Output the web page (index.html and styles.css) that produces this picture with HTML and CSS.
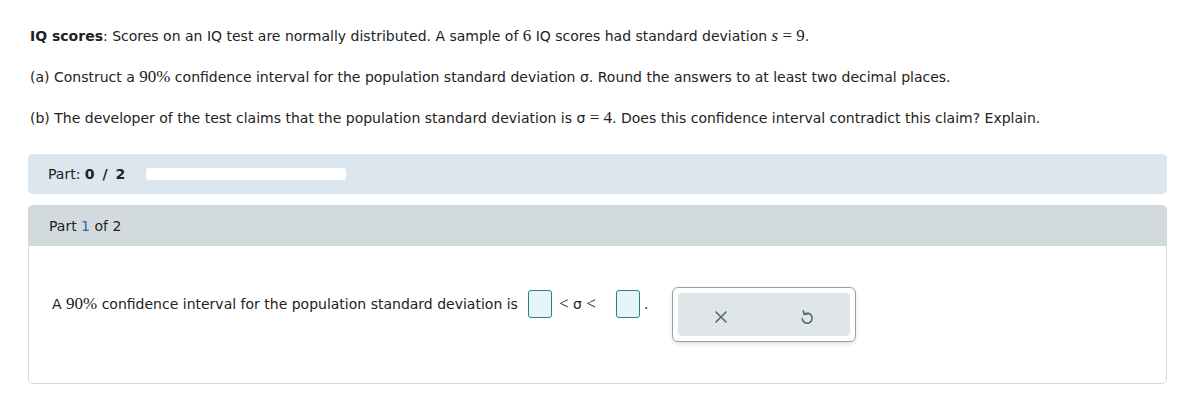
FILE: index.html
```html
<!DOCTYPE html>
<html>
<head>
<meta charset="utf-8">
<link rel="stylesheet" href="styles.css">
</head>
<body>
<div class="page">
  <div class="question">
    <p class="line"><b>IQ scores</b>: Scores on an IQ test are normally distributed. A sample of <span class="m">6</span> IQ scores had standard deviation <span class="m"><i>s</i> = 9</span>.</p>
    <p class="line">(a) Construct a <span class="m">90%</span> confidence interval for the population standard deviation <span class="sig">σ</span>. Round the answers to at least two decimal places.</p>
    <p class="line">(b) The developer of the test claims that the population standard deviation is <span class="sig">σ</span> <span class="m">= 4</span>. Does this confidence interval contradict this claim? Explain.</p>
  </div>

  <div class="progress">
    <span class="plabel">Part: <b class="pval">0 / 2</b></span>
    <span class="pbar"></span>
  </div>

  <div class="panel">
    <div class="panel-head"><span>Part <span class="num">1</span> of 2</span></div>
    <div class="panel-body">
      <div class="answer">
        <span>A <span class="m">90%</span> confidence interval for the population standard deviation is</span>
        <span class="box"></span>
        <span class="rel"><span class="m">&lt;</span> σ <span class="m">&lt;</span></span>
        <span class="box"></span>
        <span class="dot">.</span>
      </div>
      <div class="tools">
        <div class="tools-inner">
          <svg class="ico" width="14" height="14" viewBox="0 0 14 14"><path d="M2 2 L12 12 M12 2 L2 12" stroke="#4d6a78" stroke-width="1.6" fill="none" stroke-linecap="round"/></svg>
          <svg class="ico" width="14" height="16" viewBox="0 0 14 16"><path d="M4.2 5.2 A5 5 0 1 1 2.2 9.5" stroke="#4d6a78" stroke-width="1.6" fill="none" stroke-linecap="round"/><path d="M3.2 1.8 L4.4 5.4 L8 4.6" stroke="#4d6a78" stroke-width="1.6" fill="none" stroke-linecap="round" stroke-linejoin="round"/></svg>
        </div>
      </div>
    </div>
  </div>
</div>
</body>
</html>
```

FILE: styles.css
```css
html, body {
  margin: 0;
  padding: 0;
  background: #fff;
}
body {
  font-family: "DejaVu Sans", Verdana, sans-serif;
  font-size: 14px;
  color: #222;
}
.page {
  padding: 20px 27px 0 28px;
}
.question {
  padding-left: 2px;
}
.line {
  margin: 0 0 21px 0;
  line-height: 20px;
  height: 20px;
  white-space: nowrap;
}
.line:first-child { margin-top: 6px; }
.m {
  font-family: "Liberation Serif", "Times New Roman", serif;
  font-size: 17px;
}
.progress {
  margin-top: 26px;
  height: 40px;
  background: #dbe6ef;
  border-radius: 5px;
  display: flex;
  align-items: center;
  padding-left: 20px;
}
.plabel { width: 98px; white-space: nowrap; }
.pval { word-spacing: 2px; letter-spacing: 0.5px; }
.pbar {
  width: 200px;
  height: 12px;
  background: #fff;
  border-radius: 3px;
}
.panel {
  margin-top: 11px;
  border-radius: 5px;
  border: 1px solid #d3dadd;
}
.panel-head {
  height: 40px;
  background: #d3dadd;
  display: flex;
  align-items: center;
  padding-left: 20px;
}
.num { color: #2266aa; }
.panel-body {
  height: 137px;
  display: flex;
  align-items: flex-start;
  padding-left: 23px;
  padding-top: 42px;
  box-sizing: border-box;
}
.answer {
  display: flex;
  align-items: center;
  height: 28px;
  margin-top: 2px;
  white-space: nowrap;
}
.box {
  width: 22px;
  height: 26px;
  border: 1px solid #2b7c8c;
  border-radius: 3px;
  background: #e6f4f8;
  margin-left: 10px;
}
.rel { margin: 0 10px 0 7px; }
.dot { margin-left: 4px; }
.tools {
  margin-left: 24px;
  width: 184px;
  height: 55px;
  border: 1px solid #8ea4ab;
  border-radius: 6px;
  background: #fff;
  box-sizing: border-box;
  padding: 5px;
  margin-top: -1px;
  box-shadow: 0 2px 4px rgba(0,0,0,0.12);
}
.tools-inner {
  height: 100%;
  background: #e0e6e8;
  border-radius: 4px;
  display: flex;
  align-items: center;
  justify-content: space-around;
  padding-top: 4px;
  box-sizing: border-box;
}
```
